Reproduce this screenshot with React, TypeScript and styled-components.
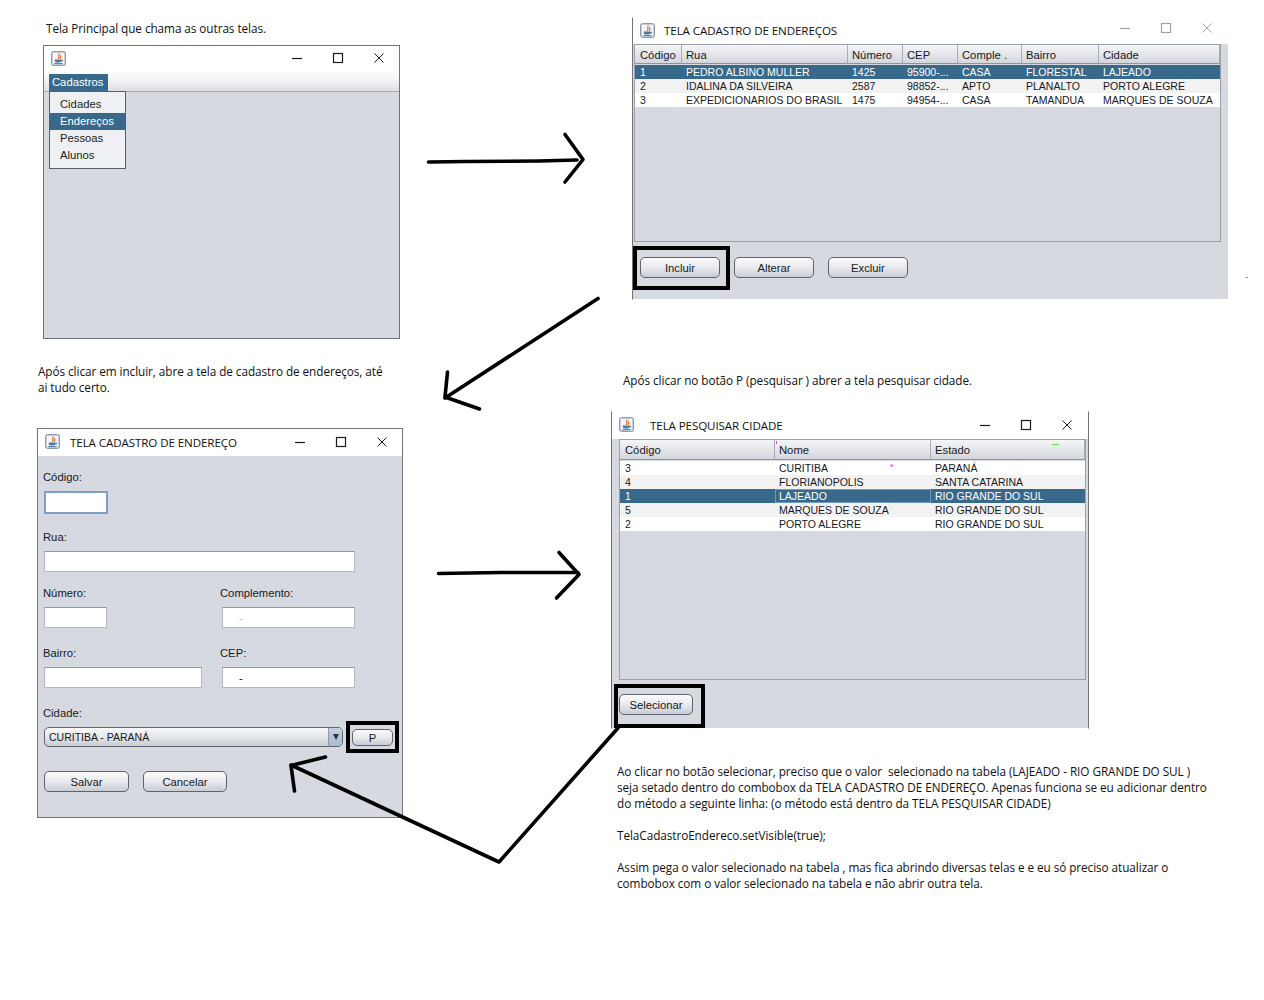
import styled, { createGlobalStyle } from 'styled-components';

const GlobalStyle = createGlobalStyle`
	html, body {
		margin: 0;
		padding: 0;
		background: #fff;
	}
	* {
		box-sizing: border-box;
	}
`;

const Canvas = styled.div`
	position: relative;
	width: 1264px;
	height: 1000px;
	overflow: hidden;
	background: #fff;
`;

const Caption = styled.div<{ $x: number; $y: number }>`
	position: absolute;
	left: ${p => p.$x}px;
	top: ${p => p.$y}px;
	font-family: 'Open Sans', 'Liberation Sans', sans-serif;
	font-size: 11.75px;
	line-height: 16px;
	letter-spacing: -0.06px;
	color: #111;
	white-space: pre;
`;

const Win = styled.div<{ $x: number; $y: number; $w: number; $h: number; $open?: boolean; $rightLine?: boolean }>`
	position: absolute;
	left: ${p => p.$x}px;
	top: ${p => p.$y}px;
	width: ${p => p.$w}px;
	height: ${p => p.$h}px;
	display: flex;
	flex-direction: column;
	background: #d6d9e0;
	background-clip: padding-box;
	border: 1px solid #6f7278;
	border-top-color: ${p => (p.$open ? 'transparent' : '#6f7278')};
	border-right-color: ${p => (p.$open && !p.$rightLine ? 'transparent' : '#6f7278')};
	border-bottom-color: ${p => (p.$open ? 'transparent' : '#6f7278')};
	font-family: 'Liberation Sans', Arial, sans-serif;
	font-size: 11.25px;
	color: #16181c;
`;

const TitleBar = styled.div<{ $h: number; $gap: number }>`
	height: ${p => p.$h}px;
	flex: none;
	display: flex;
	align-items: center;
	gap: ${p => p.$gap}px;
	padding-left: 7px;
	background: #fff;
`;

const IconSlot = styled.div<{ $lift: number }>`
	display: flex;
	padding-bottom: ${p => p.$lift * 2}px;
`;

const TitleText = styled.span`
	font-family: 'Open Sans', 'Liberation Sans', sans-serif;
	font-size: 11.6px;
	letter-spacing: -0.1px;
	color: #111;
	flex: 1;
	padding-bottom: 1px;
	white-space: nowrap;
`;

const Controls = styled.div<{ $dim?: boolean; $right: number; $lift: number }>`
	display: flex;
	gap: 27px;
	padding-right: ${p => p.$right}px;
	padding-bottom: ${p => p.$lift * 2}px;
	color: ${p => (p.$dim ? '#a2a2a2' : '#1a1a1a')};
`;

const Menubar = styled.div`
	height: 20px;
	flex: none;
	padding: 2px 0 0 5px;
	background: linear-gradient(#fcfcfd 0%, #f3f4f6 40%, #dcdee3 100%);
	border-bottom: 1px solid #a6a9b0;
	display: flex;
`;

const MenuTitle = styled.div`
	width: 59px;
	height: 17px;
	line-height: 16px;
	padding-left: 3px;
	background: #39698a;
	color: #fff;
`;

const Popup = styled.div`
	position: absolute;
	left: 5px;
	top: 45px;
	width: 77px;
	height: 78px;
	padding-top: 4px;
	background: #eff0f3;
	border: 1px solid #5c6066;
	z-index: 2;
`;

const PopupItem = styled.div<{ $active?: boolean }>`
	height: 17px;
	line-height: 17px;
	padding-left: 10px;
	background: ${p => (p.$active ? '#39698a' : 'transparent')};
	color: ${p => (p.$active ? '#fff' : '#222')};
`;

const TablePanel = styled.div<{ $w: number; $h: number; $ml: number }>`
	width: ${p => p.$w}px;
	height: ${p => p.$h}px;
	margin-left: ${p => p.$ml}px;
	flex: none;
	border: 1px solid #9b9fa7;
	background: #d6d9e0;
`;

const TableRow = styled.div<{ $cols: string }>`
	display: grid;
	grid-template-columns: ${p => p.$cols};
`;

const HeaderCell = styled.div<{ $h: number }>`
	height: ${p => p.$h}px;
	line-height: 21px;
	padding-left: 4px;
	background: linear-gradient(#f4f5f7 0%, #e6e8ec 45%, #d3d6dc 100%);
	border-right: 1px solid #a8acb4;
	border-bottom: 1px solid #8f939b;
	white-space: nowrap;
	overflow: hidden;

	&:first-child {
		padding-left: 5px;
	}
`;

const BodyRows = styled.div`
	margin-top: 1px;
`;

const DataRow = styled(TableRow)<{ $tone: Tone }>`
	height: 14px;
	line-height: 14px;
	background: ${p => (p.$tone === 'selected' ? '#39698a' : p.$tone === 'alt' ? '#f2f2f2' : '#fff')};
	color: ${p => (p.$tone === 'selected' ? '#fff' : '#16181c')};
`;

const DataCell = styled.div<{ $focus?: boolean }>`
	padding-left: 4px;
	font-size: 10.5px;
	white-space: nowrap;
	overflow: hidden;
	box-shadow: ${p => (p.$focus ? 'inset 0 0 0 1px #6f9bc8' : 'none')};

	&:first-child {
		padding-left: 5px;
	}
`;

const ButtonRow = styled.div<{ $top: number; $left: number; $gap: number }>`
	display: flex;
	gap: ${p => p.$gap}px;
	margin-top: ${p => p.$top}px;
	padding-left: ${p => p.$left}px;
`;

const Mark = styled.div<{ $w: number; $h: number; $pl: number; $pt: number }>`
	width: ${p => p.$w}px;
	height: ${p => p.$h}px;
	padding: ${p => p.$pt}px 0 0 ${p => p.$pl}px;
	border: 4px solid #000;
	flex: none;
`;

const SwingButton = styled.button<{ $w: number; $h?: number }>`
	display: block;
	width: ${p => p.$w}px;
	height: ${p => p.$h ?? 21}px;
	padding: 0;
	border: 1px solid #5f646c;
	border-radius: 5px;
	background: linear-gradient(#fbfbfc 0%, #e9eaee 50%, #c9ccd3 100%);
	font-family: 'Liberation Sans', Arial, sans-serif;
	font-size: 11.25px;
	color: #16181c;
`;

const Form = styled.div`
	padding: 14px 0 0 5px;
	display: flex;
	flex-direction: column;
`;

const FormLine = styled.div<{ $top?: number }>`
	display: flex;
	margin-top: ${p => p.$top ?? 0}px;
`;

const Field = styled.div<{ $w: number }>`
	width: ${p => p.$w}px;
	flex: none;
`;

const FieldLabel = styled.div`
	height: 14px;
	line-height: 14px;
	margin-bottom: 7px;
`;

const TextBox = styled.div<{ $w: number; $h?: number; $focus?: boolean; $inset?: number; $faint?: boolean }>`
	width: ${p => p.$w}px;
	height: ${p => p.$h ?? 21}px;
	margin-left: ${p => p.$inset ?? 1}px;
	padding-left: 16px;
	line-height: 20px;
	background: #fff;
	color: ${p => (p.$faint ? '#c4c4c4' : '#16181c')};
	border: ${p => (p.$focus ? '2px solid #7d9fc5' : '1px solid #b5b8be')};
	border-top-color: ${p => (p.$focus ? '#7d9fc5' : '#96999f')};
`;

const Combo = styled.div`
	width: 299px;
	height: 20px;
	margin-left: 1px;
	display: flex;
	border: 1px solid #5f646c;
	border-radius: 5px;
	overflow: hidden;
	background: linear-gradient(#f8f9fa 0%, #e5e7eb 50%, #c8cbd2 100%);
`;

const ComboText = styled.div`
	flex: 1;
	padding-left: 4px;
	line-height: 18px;
	font-size: 10.5px;
`;

const ComboArrow = styled.div`
	width: 14px;
	display: flex;
	align-items: center;
	justify-content: center;
	border-left: 1px solid #8d99a8;
	background: linear-gradient(#c3d2e2 0%, #a9bccf 100%);

	&::after {
		content: '';
		border-left: 3.5px solid transparent;
		border-right: 3.5px solid transparent;
		border-top: 6px solid #2b3440;
	}
`;

const PBox = styled.div`
	position: absolute;
	left: 308px;
	top: 292px;
	width: 53px;
	height: 32px;
	padding: 4px 0 0 2px;
	border: 4px solid #000;
`;

const Scribbles = styled.svg`
	position: absolute;
	left: 0;
	top: 0;
	pointer-events: none;
	z-index: 5;
`;

type Tone = 'white' | 'alt' | 'selected';

const JavaIcon = ({ lift }: { lift: number }) => (
	<IconSlot $lift={lift}>
		<svg width="15" height="15" viewBox="0 0 15 15">
			<rect x="0.5" y="0.5" width="14" height="14" rx="2" fill="#c3cfdd" stroke="#8f9bab" />
			<rect x="2" y="2" width="11" height="11" fill="#f3f5f8" />
			<path d="M8.5 2.5 C6 4.5 9.8 5.5 7 8 M10.2 4.2 C8.8 5.4 10.5 6 9.2 7.6" fill="none" stroke="#e2701f" strokeWidth="1.2" />
			<path d="M3.8 8.4 H10.4 V10 C10.4 11.2 9.2 11.6 7.1 11.6 C5 11.6 3.8 11.2 3.8 10 Z M10.4 8.8 H12 V10.2 H10.2" fill="#5378a3" />
			<path d="M3.2 12.6 H11.6" stroke="#5378a3" strokeWidth="1" />
		</svg>
	</IconSlot>
);

const WinControls = ({ dim, right, lift }: { dim?: boolean; right: number; lift: number }) => (
	<Controls $dim={dim} $right={right} $lift={lift}>
		<svg width="14" height="14" viewBox="0 0 14 14">
			<path d="M2 7.5 H12" stroke="currentColor" strokeWidth="1.2" />
		</svg>
		<svg width="14" height="14" viewBox="0 0 14 14">
			<rect x="2.5" y="2.5" width="9" height="9" fill="none" stroke="currentColor" strokeWidth="1.2" />
		</svg>
		<svg width="14" height="14" viewBox="0 0 14 14">
			<path d="M2.5 2.5 L11.5 11.5 M11.5 2.5 L2.5 11.5" stroke="currentColor" strokeWidth="1" />
		</svg>
	</Controls>
);

const Arrows = () => (
	<Scribbles width="1264" height="1000" viewBox="0 0 1264 1000">
		<g fill="none" stroke="#000" strokeWidth="3.6" strokeLinecap="round" strokeLinejoin="round">
			<path d="M428.5 162 L466 161.5 L539 161 L577 160" />
			<path d="M565 134.5 L583 159.5 L565 182" />
			<path d="M598 298.5 L445 398" />
			<path d="M447.5 372 L445 397 L479.5 409" />
			<path d="M438.5 573.5 L501 572.5 L578 572.5" />
			<path d="M559 552.5 L579 574.5 L556.5 598" />
			<path d="M618 728 L499 862 L291 765" />
			<path d="M325.5 757 L291 765.5 L294.5 791" />
		</g>
		<g fill="none" strokeWidth="1">
			<path d="M776.5 441 V444" stroke="#e23ce2" />
			<path d="M890 466 H893 M892 464 V466" stroke="#e23ce2" />
			<path d="M1052 444.5 H1059" stroke="#62d962" />
			<path d="M1245 277.5 H1248" stroke="#9a9a9a" />
		</g>
	</Scribbles>
);

const addressCols = '47px 166px 55px 55px 64px 77px 1fr';
const cityCols = '155px 156px 1fr';

const addressHeaders = ['Código', 'Rua', 'Número', 'CEP', 'Comple .', 'Bairro', 'Cidade'];
const addressRows = [
	['1', 'PEDRO ALBINO MULLER', '1425', '95900-...', 'CASA', 'FLORESTAL', 'LAJEADO'],
	['2', 'IDALINA DA SILVEIRA', '2587', '98852-...', 'APTO', 'PLANALTO', 'PORTO ALEGRE'],
	['3', 'EXPEDICIONARIOS DO BRASIL', '1475', '94954-...', 'CASA', 'TAMANDUA', 'MARQUES DE SOUZA'],
];
const addressTones: Tone[] = ['selected', 'alt', 'white'];

const cityHeaders = ['Código', 'Nome', 'Estado'];
const cityRows = [
	['3', 'CURITIBA', 'PARANÁ'],
	['4', 'FLORIANOPOLIS', 'SANTA CATARINA'],
	['1', 'LAJEADO', 'RIO GRANDE DO SUL'],
	['5', 'MARQUES DE SOUZA', 'RIO GRANDE DO SUL'],
	['2', 'PORTO ALEGRE', 'RIO GRANDE DO SUL'],
];
const cityTones: Tone[] = ['white', 'alt', 'selected', 'alt', 'white'];

const DataTable = ({
	cols,
	headers,
	rows,
	tones,
	headerHeight,
	focusRow,
}: {
	cols: string;
	headers: string[];
	rows: string[][];
	tones: Tone[];
	headerHeight: number;
	focusRow?: number;
}) => (
	<>
		<TableRow $cols={cols}>
			{headers.map(h => (
				<HeaderCell key={h} $h={headerHeight}>
					{h}
				</HeaderCell>
			))}
		</TableRow>
		<BodyRows>
			{rows.map((row, i) => (
				<DataRow key={row[0]} $cols={cols} $tone={tones[i]}>
					{row.map((cell, j) => (
						<DataCell key={j} $focus={i === focusRow && j === 1}>
							{cell}
						</DataCell>
					))}
				</DataRow>
			))}
		</BodyRows>
	</>
);

const App = () => {
	return (
		<Canvas>
			<GlobalStyle />

			<Caption $x={46} $y={20}>Tela Principal que chama as outras telas.</Caption>
			<Win $x={43} $y={45} $w={357} $h={294}>
				<TitleBar $h={26} $gap={0}>
					<JavaIcon lift={1} />
					<TitleText />
					<WinControls right={13} lift={1} />
				</TitleBar>
				<Menubar>
					<MenuTitle>Cadastros</MenuTitle>
				</Menubar>
				<Popup>
					<PopupItem>Cidades</PopupItem>
					<PopupItem $active>Endereços</PopupItem>
					<PopupItem>Pessoas</PopupItem>
					<PopupItem>Alunos</PopupItem>
				</Popup>
			</Win>

			<Win $x={632} $y={17} $w={597} $h={283} $open>
				<TitleBar $h={26} $gap={9}>
					<JavaIcon lift={1} />
					<TitleText>TELA CADASTRO DE ENDEREÇOS</TitleText>
					<WinControls dim right={14} lift={3} />
				</TitleBar>
				<TablePanel $w={587} $h={198} $ml={1}>
					<DataTable
						cols={addressCols}
						headers={addressHeaders}
						rows={addressRows}
						tones={addressTones}
						headerHeight={19}
					/>
				</TablePanel>
				<ButtonRow $top={4} $left={0} $gap={4}>
					<Mark $w={97} $h={44} $pl={3} $pt={7}>
						<SwingButton $w={80}>Incluir</SwingButton>
					</Mark>
					<ButtonRow $top={11} $left={0} $gap={14}>
						<SwingButton $w={80}>Alterar</SwingButton>
						<SwingButton $w={80}>Excluir</SwingButton>
					</ButtonRow>
				</ButtonRow>
			</Win>

			<Caption $x={38} $y={363}>
				{'Após clicar em incluir, abre a tela de cadastro de endereços, até\nai tudo certo.'}
			</Caption>
			<Win $x={37} $y={428} $w={366} $h={390}>
				<TitleBar $h={27} $gap={10}>
					<JavaIcon lift={1} />
					<TitleText>TELA CADASTRO DE ENDEREÇO</TitleText>
					<WinControls right={13} lift={1} />
				</TitleBar>
				<Form>
					<Field $w={360}>
						<FieldLabel>Código:</FieldLabel>
						<TextBox $w={64} $h={23} $focus />
					</Field>
					<FormLine $top={16}>
						<Field $w={360}>
							<FieldLabel>Rua:</FieldLabel>
							<TextBox $w={311} />
						</Field>
					</FormLine>
					<FormLine $top={14}>
						<Field $w={177}>
							<FieldLabel>Número:</FieldLabel>
							<TextBox $w={63} />
						</Field>
						<Field $w={150}>
							<FieldLabel>Complemento:</FieldLabel>
							<TextBox $w={133} $inset={2} $faint>
								-
							</TextBox>
						</Field>
					</FormLine>
					<FormLine $top={18}>
						<Field $w={177}>
							<FieldLabel>Bairro:</FieldLabel>
							<TextBox $w={158} />
						</Field>
						<Field $w={150}>
							<FieldLabel>CEP:</FieldLabel>
							<TextBox $w={133} $inset={2}>
								-
							</TextBox>
						</Field>
					</FormLine>
					<FormLine $top={18}>
						<Field $w={354}>
							<FieldLabel>Cidade:</FieldLabel>
							<Combo>
								<ComboText>CURITIBA - PARANÁ</ComboText>
								<ComboArrow />
							</Combo>
						</Field>
					</FormLine>
					<ButtonRow $top={24} $left={1} $gap={14}>
						<SwingButton $w={85}>Salvar</SwingButton>
						<SwingButton $w={84}>Cancelar</SwingButton>
					</ButtonRow>
				</Form>
				<PBox>
					<SwingButton $w={41} $h={17}>
						P
					</SwingButton>
				</PBox>
			</Win>

			<Caption $x={623} $y={372}>Após clicar no botão P (pesquisar ) abrer a tela pesquisar cidade.</Caption>
			<Win $x={611} $y={411} $w={478} $h={318} $open $rightLine>
				<TitleBar $h={27} $gap={16}>
					<JavaIcon lift={1} />
					<TitleText>TELA PESQUISAR CIDADE</TitleText>
					<WinControls right={14} lift={1} />
				</TitleBar>
				<TablePanel $w={467} $h={241} $ml={7}>
					<DataTable
						cols={cityCols}
						headers={cityHeaders}
						rows={cityRows}
						tones={cityTones}
						headerHeight={20}
						focusRow={2}
					/>
				</TablePanel>
				<ButtonRow $top={4} $left={2} $gap={0}>
					<Mark $w={91} $h={44} $pl={1} $pt={6}>
						<SwingButton $w={74}>Selecionar</SwingButton>
					</Mark>
				</ButtonRow>
			</Win>

			<Caption $x={617} $y={763}>
				{'Ao clicar no botão selecionar, preciso que o valor  selecionado na tabela (LAJEADO - RIO GRANDE DO SUL )\nseja setado dentro do combobox da TELA CADASTRO DE ENDEREÇO. Apenas funciona se eu adicionar dentro\ndo método a seguinte linha: (o método está dentro da TELA PESQUISAR CIDADE)\n\nTelaCadastroEndereco.setVisible(true);\n\nAssim pega o valor selecionado na tabela , mas fica abrindo diversas telas e e eu só preciso atualizar o\ncombobox com o valor selecionado na tabela e não abrir outra tela.'}
			</Caption>

			<Arrows />
		</Canvas>
	);
};

export default App;
